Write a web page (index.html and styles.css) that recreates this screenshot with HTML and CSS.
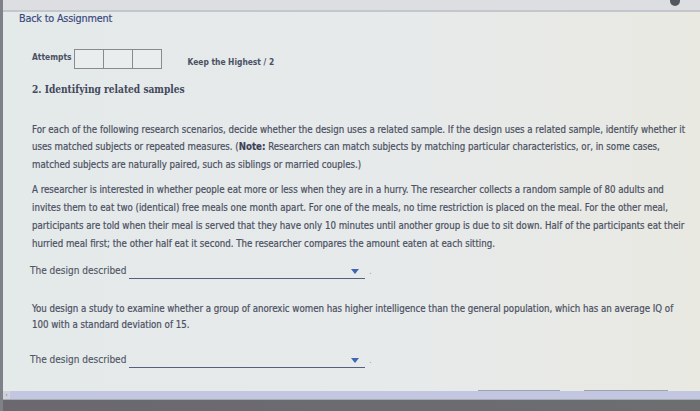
FILE: index.html
```html
<!DOCTYPE html>
<html>
<head>
<meta charset="utf-8">
<link rel="stylesheet" href="styles.css">
</head>
<body>
<div class="screen">
  <div class="topbar"><span class="help-dot"></span></div>
  <div class="page">
    <a class="back">Back to Assignment</a>
    <div class="attempts-row">
      <span class="label">Attempts</span>
      <div class="boxes"><span class="box"></span><span class="box"></span><span class="box"></span></div>
      <span class="keep">Keep the Highest / 2</span>
    </div>
    <h2 class="q-title">2. Identifying related samples</h2>
    <p class="para p-intro">For each of the following research scenarios, decide whether the design uses a related sample. If the design uses a related sample, identify whether it<br>uses matched subjects or repeated measures. (<b>Note:</b> Researchers can match subjects by matching particular characteristics, or, in some cases,<br>matched subjects are naturally paired, such as siblings or married couples.)</p>
    <p class="para p-scen">A researcher is interested in whether people eat more or less when they are in a hurry. The researcher collects a random sample of 80 adults and<br>invites them to eat two (identical) free meals one month apart. For one of the meals, no time restriction is placed on the meal. For the other meal,<br>participants are told when their meal is served that they have only 10 minutes until another group is due to sit down. Half of the participants eat their<br>hurried meal first; the other half eat it second. The researcher compares the amount eaten at each sitting.</p>
    <div class="answer a1">
      <span class="ans-label">The design described</span>
      <span class="select"><span class="arrow"></span></span>
      <span class="dot">.</span>
    </div>
    <p class="para p-scen2">You design a study to examine whether a group of anorexic women has higher intelligence than the general population, which has an average IQ of<br>100 with a standard deviation of 15.</p>
    <div class="answer a2">
      <span class="ans-label">The design described</span>
      <span class="select"><span class="arrow"></span></span>
      <span class="dot">.</span>
    </div>
    <div class="foot-lines"><span class="fl fl1"></span><span class="fl fl2"></span></div>
  </div>
  <div class="scrollbar"><span class="sb-arrow">‹</span><span class="sb-track"></span></div>
  <div class="bezel"></div>
</div>
</body>
</html>
```
FILE: styles.css
```css
* { box-sizing: border-box; }
html, body { margin: 0; padding: 0; }
body {
  width: 700px;
  height: 411px;
  overflow: hidden;
  background: #e7eaea;
  font-family: "DejaVu Sans Condensed", "DejaVu Sans", sans-serif;
  color: #4a5060;
}
.screen {
  width: 700px;
  height: 411px;
  display: flex;
  flex-direction: column;
  border-left: 3px solid #7e8188;
  background: linear-gradient(90deg, #e4e9ea 0%, #e7eaea 60%, #e9e9e2 100%);
}
.topbar {
  height: 12px;
  flex: none;
  background: #dcdee1;
  border-bottom: 2px solid #c3c6cb;
  position: relative;
}
.help-dot {
  position: absolute;
  right: 20px;
  top: -4px;
  width: 10px;
  height: 10px;
  border-radius: 50%;
  background: #55585e;
}
.page {
  flex: 1;
  padding: 0 0 0 16px;
  display: flex;
  flex-direction: column;
}
.back {
  margin-top: 1px;
  font-size: 10.8px;
  color: #38477c;
  letter-spacing: -0.2px;
  line-height: 12px;
  -webkit-text-stroke: 0.15px #38477c;
}
.attempts-row {
  margin-top: 24px;
  margin-left: 13px;
  display: flex;
  align-items: center;
  height: 20px;
}
.label {
  font-size: 8.4px;
  font-weight: bold;
  color: #4a5164;
  margin-right: 4px;
  margin-top: -4px;
}
.boxes { display: flex; }
.box {
  width: 30px;
  height: 20px;
  border: 1px solid #878b90;
  margin-left: -1px;
  background: #eaeded;
}
.keep {
  margin-left: 25px;
  font-size: 8.4px;
  font-weight: bold;
  color: #4a5164;
  margin-top: 5px;
}
.q-title {
  margin: 15px 0 0 13px;
  font-family: "DejaVu Serif Condensed", "DejaVu Serif", serif;
  font-size: 10.1px;
  font-weight: bold;
  color: #42485a;
  line-height: 12px;
}
.para {
  margin: 0 0 0 13px;
  font-size: 9.65px;
  line-height: 17.4px;
  white-space: nowrap;
  color: #4b5162;
  -webkit-text-stroke: 0.2px #4b5162;
}
.para b { color: #3b4155; }
.p-intro { margin-top: 25px; }
.p-scen { margin-top: 8px; line-height: 17.8px; }
.answer {
  display: flex;
  align-items: flex-start;
  margin-left: 11px;
  height: 14px;
}
.a1 { margin-top: 13px; }
.a2 { margin-top: 21px; }
.ans-label {
  font-size: 10px;
  color: #525766;
  line-height: 12px;
  -webkit-text-stroke: 0.15px #525766;
}
.select {
  width: 236px;
  height: 14px;
  border-bottom: 1px solid #55607e;
  margin-left: 3px;
  position: relative;
}
.arrow {
  position: absolute;
  right: 6px;
  top: 4px;
  width: 0;
  height: 0;
  border-left: 4.5px solid transparent;
  border-right: 4.5px solid transparent;
  border-top: 5px solid #3f66b6;
}
.dot {
  font-size: 8px;
  margin-left: 4px;
  color: #999;
  line-height: 14px;
}
.p-scen2 { margin-top: 22px; line-height: 16px; }
.foot-lines {
  margin-top: auto;
  height: 8px;
  display: flex;
  align-items: flex-end;
  padding-left: 459px;
  gap: 24px;
}
.fl {
  height: 1px;
  background: #9ea3ad;
}
.fl1 { width: 82px; }
.fl2 { width: 84px; }
.scrollbar {
  height: 8px;
  flex: none;
  display: flex;
  align-items: stretch;
  background: #d0d3dc;
}
.sb-arrow {
  width: 7px;
  font-size: 7px;
  line-height: 8px;
  color: #888;
  text-align: center;
}
.sb-track {
  flex: 1;
  background: #c3c6e0;
}
.bezel {
  height: 12px;
  flex: none;
  background: linear-gradient(90deg, #6b6870, #6c6e70);
  border-top: 1px solid #a9abb2;
}
```
